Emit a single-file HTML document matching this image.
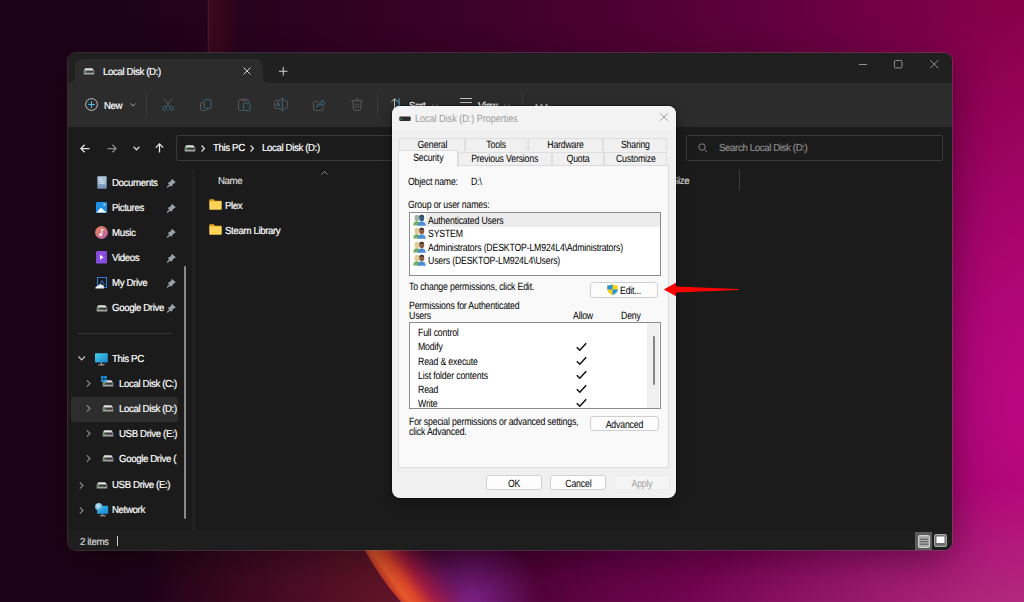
<!DOCTYPE html>
<html><head><meta charset="utf-8">
<style>
*{margin:0;padding:0;box-sizing:border-box}
html,body{width:1024px;height:602px;overflow:hidden}
body{position:relative;font-family:"Liberation Sans",sans-serif;background:#1c0214}
.a{position:absolute}
svg{position:absolute;overflow:visible}
#bg{left:0;top:0;width:1024px;height:602px;background:
  radial-gradient(402px 167px at 1061px 649px, rgba(229,180,203,.30), rgba(229,180,203,0)),
  radial-gradient(220px 70px at 650px 620px, rgba(150,20,110,.22), rgba(150,20,110,0)),
  radial-gradient(759px 399px at 1132px 406px, rgba(229,13,178,.62), rgba(229,13,178,0)),
  linear-gradient(90deg, #1e0318 0px, #1e0318 120px, #2c0220 300px, #3a0226 450px, #4a0032 600px, #65003f 800px, #8a0049 1024px)}
.t,.d{position:absolute;white-space:nowrap;line-height:14px;text-rendering:geometricPrecision}
.t{font-size:10.2px;letter-spacing:-0.4px;color:#fff;-webkit-text-stroke:0.2px currentColor;transform:scaleX(0.95);transform-origin:0 0}
.d{font-size:10.5px;letter-spacing:-0.2px;color:#000;transform:scaleX(0.83);transform-origin:0 0}
.c{transform-origin:50% 0 !important}
</style></head><body>
<div id="bg" class="a"></div>
<div class="a" style="left:207.00px;top:0.00px;width:36.00px;height:53.00px;background:linear-gradient(90deg,rgba(150,70,70,.0) 0px,rgba(150,70,70,.28) 1.5px,rgba(100,20,35,.32) 3px,rgba(95,18,32,.3) 14px,rgba(70,10,30,.15) 26px,rgba(60,5,30,0) 36px)"></div>
<svg style="left:0;top:0" width="1024" height="602" viewBox="0 0 1024 602"><defs><linearGradient id="rt" gradientUnits="userSpaceOnUse" x1="150" y1="0" x2="380" y2="0"><stop offset="0" stop-color="#6e1628" stop-opacity="0"/><stop offset="1" stop-color="#6e1a2a" stop-opacity=".75"/></linearGradient><linearGradient id="ob" gradientUnits="userSpaceOnUse" x1="382" y1="576" x2="434" y2="539"><stop offset="0" stop-color="#c43a2a"/><stop offset=".1" stop-color="#e85a2c"/><stop offset=".25" stop-color="#dc442c"/><stop offset=".45" stop-color="#b82040" stop-opacity=".8"/><stop offset="1" stop-color="#6a1060" stop-opacity="0"/></linearGradient><radialGradient id="pg" gradientUnits="userSpaceOnUse" cx="468" cy="606" r="75"><stop offset="0" stop-color="#8a2aa0" stop-opacity=".85"/><stop offset="1" stop-color="#8a2aa0" stop-opacity="0"/></radialGradient></defs><path d="M150 550H364.5Q380 578 401 602H150Z" fill="url(#rt)"/><ellipse cx="468" cy="606" rx="90" ry="60" fill="url(#pg)"/><path d="M364.5 550H480L530 602H401Q380 578 364.5 550Z" fill="url(#ob)"/></svg>
<div class="a" style="left:68.00px;top:53.00px;width:884.00px;height:497.00px;background:#1b1b1b;border-radius:8px;box-shadow:0 0 0 1px rgba(120,120,120,.33), 0 10px 36px rgba(0,0,0,.38)"></div>
<div class="a" style="left:68.00px;top:53.00px;width:884.00px;height:30.00px;background:#202020;border-radius:8px 8px 0 0"></div>
<div class="a" style="left:75.00px;top:59.00px;width:188.40px;height:24.00px;background:#2c2c2c;border-radius:7px 7px 0 0"></div>
<div class="a" style="left:68.00px;top:83.00px;width:884.00px;height:44.00px;background:#2c2c2c"></div>
<svg style="left:69px;top:77px" width="6" height="6" viewBox="0 0 6 6"><path d="M6 0V6H0A6 6 0 0 0 6 0Z" fill="#2c2c2c"/></svg>
<svg style="left:263.4px;top:77px" width="6" height="6" viewBox="0 0 6 6"><path d="M0 0V6H6A6 6 0 0 1 0 0Z" fill="#2c2c2c"/></svg>
<svg style="left:82.50px;top:67.50px" width="12" height="7" viewBox="0 0 12 7"><path d="M2.2 0.2H9.3L11.2 2.7H0.8Z" fill="#e3e3e7"/><rect x="0.7" y="2.6" width="10.6" height="3.9" rx="0.6" fill="#a4a4a4"/><rect x="1.5" y="2.7" width="9.2" height="2" fill="#3a3a3a"/><rect x="2" y="2.8" width="1.4" height="1.8" fill="#2fb52f"/></svg>
<div class="t" style="left:102.50px;top:66.07px;color:#fff;">Local Disk (D:)</div>
<svg style="left:243.00px;top:66.80px" width="8" height="8" viewBox="0 0 8 8"><path d="M0.5 0.5L7.5 7.5M7.5 0.5L0.5 7.5" stroke="#d4d4d4" stroke-width="1"/></svg>
<svg style="left:279.00px;top:67.00px" width="8.5" height="8.5" viewBox="0 0 8.5 8.5"><path d="M4.25 0V8.5M0 4.25H8.5" stroke="#d4d4d4" stroke-width="1"/></svg>
<svg style="left:858.70px;top:63.50px" width="8" height="1" viewBox="0 0 8 1"><path d="M0 0.5H8" stroke="#a0a0a0" stroke-width="0.9"/></svg>
<svg style="left:893.80px;top:59.80px" width="8.4" height="8.4" viewBox="0 0 8.4 8.4"><rect x="0.45" y="0.45" width="7.5" height="7.5" rx="1.2" fill="none" stroke="#a0a0a0" stroke-width="0.9"/></svg>
<svg style="left:930.00px;top:60.00px" width="8.4" height="8.4" viewBox="0 0 8.4 8.4"><path d="M0.2 0.2L8.2 8.2M8.2 0.2L0.2 8.2" stroke="#a0a0a0" stroke-width="0.9"/></svg>
<svg style="left:85.00px;top:98.00px" width="13" height="13" viewBox="0 0 13 13"><circle cx="6.5" cy="6.5" r="5.9" fill="none" stroke="#d0d0d0" stroke-width="0.9"/><path d="M6.5 3.3V9.7M3.3 6.5H9.7" stroke="#4cc2ff" stroke-width="1"/></svg>
<div class="t" style="left:104.00px;top:100.07px;color:#fff;">New</div>
<svg style="left:129.50px;top:103.00px" width="6" height="4" viewBox="0 0 6 4"><path d="M0.5 0.5L3 3L5.5 0.5" fill="none" stroke="#bdbdbd" stroke-width="0.8"/></svg>
<div class="a" style="left:146.00px;top:93.00px;width:1.00px;height:24.00px;background:#3a3a3a"></div>
<svg style="left:162.00px;top:98.00px" width="12" height="13" viewBox="0 0 12 13"><path d="M2 0.5L7.8 9M10 0.5L4.2 9" stroke="#5e5e5e" stroke-width="0.9"/><circle cx="2.6" cy="10.4" r="2" fill="none" stroke="#3b6b8a" stroke-width="0.9"/><circle cx="9.4" cy="10.4" r="2" fill="none" stroke="#3b6b8a" stroke-width="0.9"/></svg>
<svg style="left:200.00px;top:99.00px" width="12" height="12" viewBox="0 0 12 12"><path d="M2.5 3.2A2 2 0 0 0 0.5 5.2V9.5A2 2 0 0 0 2.5 11.5H5.5A2 2 0 0 0 7.3 10.4" fill="none" stroke="#5e5e5e" stroke-width="0.9"/><rect x="4" y="0.5" width="7" height="9" rx="1.8" fill="none" stroke="#3b6b8a" stroke-width="0.9"/></svg>
<svg style="left:237.50px;top:98.00px" width="13" height="13" viewBox="0 0 13 13"><path d="M3.5 1.6H2.3A1.8 1.8 0 0 0 0.5 3.4V10.7A1.8 1.8 0 0 0 2.3 12.5H4.5M8 1.6H9.2A1.8 1.8 0 0 1 11 3.4V4.5M3.5 2.5V1.3C3.5 0.6 8 0.6 8 1.3V2.5Z" fill="none" stroke="#5e5e5e" stroke-width="0.9"/><rect x="5.5" y="5" width="6.5" height="7.5" rx="1.5" fill="none" stroke="#3b6b8a" stroke-width="0.9"/></svg>
<svg style="left:274.00px;top:97.70px" width="14" height="13" viewBox="0 0 14 13"><rect x="0.5" y="2.5" width="13" height="8" rx="2" fill="none" stroke="#5e5e5e" stroke-width="0.9"/><rect x="7" y="1" width="3" height="11" fill="#2c2c2c"/><path d="M8.5 0.5V12.5M7 0.5H10M7 12.5H10" stroke="#3b6b8a" stroke-width="0.9"/><path d="M2.5 8.5L4.2 4L5.9 8.5M3.1 7H5.3" fill="none" stroke="#3b6b8a" stroke-width="0.9"/></svg>
<svg style="left:312.50px;top:98.00px" width="13" height="13" viewBox="0 0 13 13"><path d="M5 3.5H2.5A2 2 0 0 0 0.5 5.5V10.5A2 2 0 0 0 2.5 12.5H8.5A2 2 0 0 0 10.5 10.5V9.5" fill="none" stroke="#5e5e5e" stroke-width="0.9"/><path d="M3.5 9.5C4 6 6 4.5 9 4.5V2L12.5 5.2L9 8.4V6.2C6.5 6.2 4.8 7.3 3.5 9.5Z" fill="none" stroke="#3b6b8a" stroke-width="0.9" stroke-linejoin="round"/></svg>
<svg style="left:350.70px;top:98.00px" width="12" height="13" viewBox="0 0 12 13"><path d="M0.3 2.8H11.7M4 2.5C4 0.5 8 0.5 8 2.5M1.6 2.8L2.5 11A1.6 1.6 0 0 0 4.1 12.5H7.9A1.6 1.6 0 0 0 9.5 11L10.4 2.8M4.8 5.5V9.8M7.2 5.5V9.8" fill="none" stroke="#5e5e5e" stroke-width="0.9"/></svg>
<div class="a" style="left:377.00px;top:93.00px;width:1.00px;height:24.00px;background:#3a3a3a"></div>
<svg style="left:390.50px;top:98.00px" width="11" height="12" viewBox="0 0 11 12"><path d="M3.5 11.5V0.8M0.5 3.8L3.5 0.8L6.5 3.8" fill="none" stroke="#d0d0d0" stroke-width="0.9"/><path d="M8 0.5V11.2M5.3 8.5L8 11.2L10.7 8.5" fill="none" stroke="#4cc2ff" stroke-width="0.9"/></svg>
<div class="t" style="left:409.00px;top:100.07px;color:#fff;">Sort</div>
<svg style="left:432.00px;top:104.00px" width="6" height="4" viewBox="0 0 6 4"><path d="M0.5 0.5L3 3L5.5 0.5" fill="none" stroke="#bdbdbd" stroke-width="0.8"/></svg>
<svg style="left:460.00px;top:98.00px" width="12" height="10" viewBox="0 0 12 10"><path d="M0 0.5H12M0 4.5H12M0 8.5H12" stroke="#d0d0d0" stroke-width="0.9"/></svg>
<div class="t" style="left:478.40px;top:100.07px;color:#fff;">View</div>
<svg style="left:503.80px;top:104.00px" width="6" height="4" viewBox="0 0 6 4"><path d="M0.5 0.5L3 3L5.5 0.5" fill="none" stroke="#bdbdbd" stroke-width="0.8"/></svg>
<div class="a" style="left:522.00px;top:93.00px;width:1.00px;height:24.00px;background:#3a3a3a"></div>
<svg style="left:535.00px;top:104.00px" width="13" height="3" viewBox="0 0 13 3"><circle cx="1.5" cy="1.5" r="1.2" fill="#e0e0e0"/><circle cx="6.5" cy="1.5" r="1.2" fill="#e0e0e0"/><circle cx="11.5" cy="1.5" r="1.2" fill="#e0e0e0"/></svg>
<svg style="left:80.00px;top:143.50px" width="10" height="9" viewBox="0 0 10 9"><path d="M9.5 4.5H1M4.6 0.8L0.9 4.5L4.6 8.2" fill="none" stroke="#e6e6e6" stroke-width="1.25"/></svg>
<svg style="left:107.00px;top:143.50px" width="10" height="9" viewBox="0 0 10 9"><path d="M0.5 4.5H9M5.4 0.8L9.1 4.5L5.4 8.2" fill="none" stroke="#8a8a8a" stroke-width="1.25"/></svg>
<svg style="left:133.00px;top:145.50px" width="7" height="5" viewBox="0 0 7 5"><path d="M0.6 0.8L3.5 3.8L6.4 0.8" fill="none" stroke="#d6d6d6" stroke-width="1.25"/></svg>
<svg style="left:155.00px;top:143.00px" width="9" height="10" viewBox="0 0 9 10"><path d="M4.5 9.5V1M0.8 4.6L4.5 0.9L8.2 4.6" fill="none" stroke="#e6e6e6" stroke-width="1.25"/></svg>
<div class="a" style="left:176.40px;top:134.60px;width:496.00px;height:26.40px;border:1px solid #3a3a3a;border-radius:3px;background:#1b1b1b"></div>
<svg style="left:184.00px;top:144.50px" width="12" height="7" viewBox="0 0 12 7"><path d="M2.2 0.2H9.3L11.2 2.7H0.8Z" fill="#e3e3e7"/><rect x="0.7" y="2.6" width="10.6" height="3.9" rx="0.6" fill="#a4a4a4"/><rect x="1.5" y="2.7" width="9.2" height="2" fill="#3a3a3a"/><rect x="2" y="2.8" width="1.4" height="1.8" fill="#2fb52f"/></svg>
<svg style="left:200.50px;top:145.00px" width="4" height="7" viewBox="0 0 4 7"><path d="M0.6 0.5L3.4 3.5L0.6 6.5" fill="none" stroke="#d6d6d6" stroke-width="1.3"/></svg>
<div class="t" style="left:213.00px;top:142.07px;color:#fff;">This PC</div>
<svg style="left:250.00px;top:145.00px" width="4" height="7" viewBox="0 0 4 7"><path d="M0.6 0.5L3.4 3.5L0.6 6.5" fill="none" stroke="#d6d6d6" stroke-width="1.3"/></svg>
<div class="t" style="left:261.50px;top:142.07px;color:#fff;">Local Disk (D:)</div>
<div class="a" style="left:686.40px;top:134.70px;width:256.30px;height:26.30px;border:1px solid #3a3a3a;border-radius:2px;background:#1b1b1b"></div>
<svg style="left:698.00px;top:143.00px" width="10" height="10" viewBox="0 0 10 10"><circle cx="4" cy="4" r="3.2" fill="none" stroke="#8c8c8c" stroke-width="0.9"/><path d="M6.3 6.3L9 9" stroke="#8c8c8c" stroke-width="0.9"/></svg>
<div class="t" style="left:718.60px;top:142.07px;color:#8c8c8c;">Search Local Disk (D:)</div>
<div class="a" style="left:70.70px;top:397.00px;width:107.00px;height:24.50px;background:#2d2d2d;border-radius:3px"></div>
<div class="a" style="left:76.50px;top:333.00px;width:95.00px;height:1.00px;background:#333"></div>
<div class="a" style="left:184.00px;top:266.00px;width:2.00px;height:253.00px;background:#8a8a8a;border-radius:1px"></div>
<div class="a" style="left:192.50px;top:170.00px;width:1.50px;height:361.00px;background:#2b2b2b"></div>
<div class="a" style="left:68.00px;top:531.00px;width:884.00px;height:19.00px;background:#1e1e1e;border-radius:0 0 8px 8px"></div>
<svg style="left:96.50px;top:176.00px" width="10" height="13" viewBox="0 0 10 13"><defs><linearGradient id="gd" x1="0" y1="0" x2="0" y2="1"><stop offset="0" stop-color="#b4cbe2"/><stop offset="1" stop-color="#6f8fb3"/></linearGradient></defs><rect x="0.3" y="0.3" width="9.4" height="12.4" rx="0.8" fill="url(#gd)"/><path d="M2 3.3H5.5M2 5.3H8M2 7.3H8" stroke="#eaf2fa" stroke-width="0.8"/></svg>
<div class="t" style="left:112.00px;top:177.07px;color:#fff;">Documents</div>
<svg style="left:167.00px;top:178.50px" width="9" height="9" viewBox="0 0 9 9"><path d="M5.1 0.3L8.4 3.3L5.9 4.8L4.4 7.4L1.1 4.1L3.7 2.7Z" fill="#9ba4ac" stroke="#9ba4ac" stroke-width=".6" stroke-linejoin="round"/><path d="M3.2 5.5L0.6 8" stroke="#9ba4ac" stroke-width="1.3" stroke-linecap="round"/></svg>
<svg style="left:96.00px;top:202.00px" width="11" height="11" viewBox="0 0 11 11"><rect x="0" y="0" width="11" height="11" rx="0.8" fill="#1e8fe3"/><path d="M0.5 10.5L5 5.8L10.5 10.5Z" fill="#fff"/><circle cx="8.3" cy="2.6" r="0.9" fill="#fff"/></svg>
<div class="t" style="left:112.00px;top:202.07px;color:#fff;">Pictures</div>
<svg style="left:167.00px;top:203.50px" width="9" height="9" viewBox="0 0 9 9"><path d="M5.1 0.3L8.4 3.3L5.9 4.8L4.4 7.4L1.1 4.1L3.7 2.7Z" fill="#9ba4ac" stroke="#9ba4ac" stroke-width=".6" stroke-linejoin="round"/><path d="M3.2 5.5L0.6 8" stroke="#9ba4ac" stroke-width="1.3" stroke-linecap="round"/></svg>
<svg style="left:95.00px;top:226.20px" width="13" height="13" viewBox="0 0 13 13"><defs><linearGradient id="gm" x1="0" y1="0" x2="1" y2="1"><stop offset="0" stop-color="#f08a50"/><stop offset="1" stop-color="#b55ab0"/></linearGradient></defs><circle cx="6.5" cy="6.5" r="6.4" fill="url(#gm)"/><path d="M6.8 3V8.6" stroke="#fff" stroke-width="1"/><circle cx="5.6" cy="8.8" r="1.4" fill="#fff"/><path d="M6.8 3.2L8.6 4" stroke="#fff" stroke-width="1"/></svg>
<div class="t" style="left:112.00px;top:227.07px;color:#fff;">Music</div>
<svg style="left:167.00px;top:228.50px" width="9" height="9" viewBox="0 0 9 9"><path d="M5.1 0.3L8.4 3.3L5.9 4.8L4.4 7.4L1.1 4.1L3.7 2.7Z" fill="#9ba4ac" stroke="#9ba4ac" stroke-width=".6" stroke-linejoin="round"/><path d="M3.2 5.5L0.6 8" stroke="#9ba4ac" stroke-width="1.3" stroke-linecap="round"/></svg>
<svg style="left:96.00px;top:251.20px" width="11" height="13" viewBox="0 0 11 13"><rect x="0" y="0" width="11" height="12.6" rx="0.8" fill="#8a4ee0"/><path d="M1.2 1.5V11.5M9.8 1.5V11.5" stroke="#5d2aa8" stroke-width="1" stroke-dasharray="1 1.5"/><path d="M4 3.8L7.5 6.3L4 8.8Z" fill="#fff"/></svg>
<div class="t" style="left:112.00px;top:252.07px;color:#fff;">Videos</div>
<svg style="left:167.00px;top:253.50px" width="9" height="9" viewBox="0 0 9 9"><path d="M5.1 0.3L8.4 3.3L5.9 4.8L4.4 7.4L1.1 4.1L3.7 2.7Z" fill="#9ba4ac" stroke="#9ba4ac" stroke-width=".6" stroke-linejoin="round"/><path d="M3.2 5.5L0.6 8" stroke="#9ba4ac" stroke-width="1.3" stroke-linecap="round"/></svg>
<svg style="left:95.00px;top:277.00px" width="13" height="12" viewBox="0 0 13 12"><rect x="2.5" y="0.5" width="9" height="10" fill="none" stroke="#2b7de0" stroke-width="1"/><path d="M4.5 8L7 3.5L9.5 8" fill="none" stroke="#2b7de0" stroke-width="0.9"/><path d="M0.3 11.5C0.3 9.5 2 8.8 3 9C3.3 7.2 5.5 6.5 6.8 7.8C8.3 7.6 9.2 9 9 11.5Z" fill="#e8eef6"/></svg>
<div class="t" style="left:112.00px;top:277.07px;color:#fff;">My Drive</div>
<svg style="left:167.00px;top:278.50px" width="9" height="9" viewBox="0 0 9 9"><path d="M5.1 0.3L8.4 3.3L5.9 4.8L4.4 7.4L1.1 4.1L3.7 2.7Z" fill="#9ba4ac" stroke="#9ba4ac" stroke-width=".6" stroke-linejoin="round"/><path d="M3.2 5.5L0.6 8" stroke="#9ba4ac" stroke-width="1.3" stroke-linecap="round"/></svg>
<svg style="left:95.50px;top:304.50px" width="12" height="7" viewBox="0 0 12 7"><path d="M2.2 0.2H9.3L11.2 2.7H0.8Z" fill="#e3e3e7"/><rect x="0.7" y="2.6" width="10.6" height="3.9" rx="0.6" fill="#a4a4a4"/><rect x="1.5" y="2.7" width="9.2" height="2" fill="#3a3a3a"/><rect x="2" y="2.8" width="1.4" height="1.8" fill="#2fb52f"/></svg>
<div class="t" style="left:112.00px;top:302.07px;color:#fff;">Google Drive</div>
<svg style="left:167.00px;top:303.50px" width="9" height="9" viewBox="0 0 9 9"><path d="M5.1 0.3L8.4 3.3L5.9 4.8L4.4 7.4L1.1 4.1L3.7 2.7Z" fill="#9ba4ac" stroke="#9ba4ac" stroke-width=".6" stroke-linejoin="round"/><path d="M3.2 5.5L0.6 8" stroke="#9ba4ac" stroke-width="1.3" stroke-linecap="round"/></svg>
<svg style="left:77.80px;top:356.30px" width="8" height="5" viewBox="0 0 8 5"><path d="M0.5 0.5L3.7 3.9L6.9 0.5" fill="none" stroke="#c8c8c8" stroke-width="1.2"/></svg>
<svg style="left:95.00px;top:353.30px" width="13" height="13" viewBox="0 0 13 13"><defs><linearGradient id="gpc" x1="0" y1="0" x2="1" y2="1"><stop offset="0" stop-color="#45d6ea"/><stop offset="1" stop-color="#1a7ed0"/></linearGradient></defs><rect x="0" y="0.3" width="12.8" height="9.3" rx="0.8" fill="url(#gpc)"/><path d="M6.4 9.6V11.6M3.4 11.9H9.4" stroke="#cfcfcf" stroke-width="0.9"/></svg>
<div class="t" style="left:112.00px;top:353.07px;color:#fff;">This PC</div>
<svg style="left:85.50px;top:380.00px" width="5" height="7" viewBox="0 0 5 7"><path d="M0.8 0.4L4 3.5L0.8 6.6" fill="none" stroke="#8a8a8a" stroke-width="1.2"/></svg>
<svg style="left:102.00px;top:380.30px" width="12" height="7" viewBox="0 0 12 7"><path d="M2.2 0.2H9.3L11.2 2.7H0.8Z" fill="#e3e3e7"/><rect x="0.7" y="2.6" width="10.6" height="3.9" rx="0.6" fill="#a4a4a4"/><rect x="1.5" y="2.7" width="9.2" height="2" fill="#3a3a3a"/><rect x="2" y="2.8" width="1.4" height="1.8" fill="#2fb52f"/></svg>
<svg style="left:101.20px;top:376.20px" width="6" height="6" viewBox="0 0 6 6"><rect x="0" y="0" width="2.6" height="2.6" rx="0.4" fill="#1a9cf0"/><rect x="3.2" y="0" width="2.6" height="2.6" rx="0.4" fill="#1a9cf0"/><rect x="0" y="3.2" width="2.6" height="2.6" rx="0.4" fill="#1a9cf0"/><rect x="3.2" y="3.2" width="2.6" height="2.6" rx="0.4" fill="#1a9cf0"/></svg>
<div class="t" style="left:118.50px;top:378.07px;color:#fff;">Local Disk (C:)</div>
<svg style="left:85.50px;top:405.05px" width="5" height="7" viewBox="0 0 5 7"><path d="M0.8 0.4L4 3.5L0.8 6.6" fill="none" stroke="#8a8a8a" stroke-width="1.2"/></svg>
<svg style="left:102.00px;top:405.35px" width="12" height="7" viewBox="0 0 12 7"><path d="M2.2 0.2H9.3L11.2 2.7H0.8Z" fill="#e3e3e7"/><rect x="0.7" y="2.6" width="10.6" height="3.9" rx="0.6" fill="#a4a4a4"/><rect x="1.5" y="2.7" width="9.2" height="2" fill="#3a3a3a"/><rect x="2" y="2.8" width="1.4" height="1.8" fill="#2fb52f"/></svg>
<div class="t" style="left:118.50px;top:403.12px;color:#fff;">Local Disk (D:)</div>
<svg style="left:85.50px;top:430.10px" width="5" height="7" viewBox="0 0 5 7"><path d="M0.8 0.4L4 3.5L0.8 6.6" fill="none" stroke="#8a8a8a" stroke-width="1.2"/></svg>
<svg style="left:102.00px;top:430.40px" width="12" height="7" viewBox="0 0 12 7"><path d="M2.2 0.2H9.3L11.2 2.7H0.8Z" fill="#e3e3e7"/><rect x="0.7" y="2.6" width="10.6" height="3.9" rx="0.6" fill="#a4a4a4"/><rect x="1.5" y="2.7" width="9.2" height="2" fill="#3a3a3a"/><rect x="2" y="2.8" width="1.4" height="1.8" fill="#2fb52f"/></svg>
<div class="t" style="left:118.50px;top:428.17px;color:#fff;">USB Drive (E:)</div>
<svg style="left:85.50px;top:455.15px" width="5" height="7" viewBox="0 0 5 7"><path d="M0.8 0.4L4 3.5L0.8 6.6" fill="none" stroke="#8a8a8a" stroke-width="1.2"/></svg>
<svg style="left:102.00px;top:455.45px" width="12" height="7" viewBox="0 0 12 7"><path d="M2.2 0.2H9.3L11.2 2.7H0.8Z" fill="#e3e3e7"/><rect x="0.7" y="2.6" width="10.6" height="3.9" rx="0.6" fill="#a4a4a4"/><rect x="1.5" y="2.7" width="9.2" height="2" fill="#3a3a3a"/><rect x="2" y="2.8" width="1.4" height="1.8" fill="#2fb52f"/></svg>
<div class="t" style="left:118.50px;top:453.22px;color:#fff;">Google Drive (</div>
<div class="t" style="left:112.00px;top:478.67px;color:#fff;">USB Drive (E:)</div>
<svg style="left:78.60px;top:481.50px" width="5" height="7" viewBox="0 0 5 7"><path d="M0.8 0.4L4 3.5L0.8 6.6" fill="none" stroke="#8a8a8a" stroke-width="1.2"/></svg>
<svg style="left:96.00px;top:482.00px" width="12" height="7" viewBox="0 0 12 7"><path d="M2.2 0.2H9.3L11.2 2.7H0.8Z" fill="#e3e3e7"/><rect x="0.7" y="2.6" width="10.6" height="3.9" rx="0.6" fill="#a4a4a4"/><rect x="1.5" y="2.7" width="9.2" height="2" fill="#3a3a3a"/><rect x="2" y="2.8" width="1.4" height="1.8" fill="#2fb52f"/></svg>
<svg style="left:78.60px;top:506.70px" width="5" height="7" viewBox="0 0 5 7"><path d="M0.8 0.4L4 3.5L0.8 6.6" fill="none" stroke="#8a8a8a" stroke-width="1.2"/></svg>
<svg style="left:94.80px;top:503.00px" width="14" height="14" viewBox="0 0 14 14"><defs><linearGradient id="gn" x1="0" y1="0" x2="1" y2="1"><stop offset="0" stop-color="#32c0ea"/><stop offset="1" stop-color="#1a86d2"/></linearGradient><radialGradient id="gg" cx="0.4" cy="0.35" r="0.7"><stop offset="0" stop-color="#cfeefc"/><stop offset="1" stop-color="#3a9ad0"/></radialGradient></defs><rect x="2.2" y="2.8" width="11" height="8" fill="url(#gn)"/><path d="M7.7 10.8V12.5M4.7 12.8H10.7" stroke="#bdbdbd" stroke-width="0.9"/><circle cx="3.8" cy="3.8" r="3.7" fill="url(#gg)"/></svg>
<div class="t" style="left:112.00px;top:503.67px;color:#fff;">Network</div>
<div class="t" style="left:79.70px;top:535.57px;color:#d6d6d6;">2 items</div>
<div class="a" style="left:117.00px;top:536.00px;width:1.00px;height:10.00px;background:#cfcfcf"></div>
<div class="t" style="left:218.00px;top:174.57px;color:#d9d9d9;">Name</div>
<svg style="left:320.50px;top:170.50px" width="7" height="4" viewBox="0 0 7 4"><path d="M0.5 3.5L3.5 0.5L6.5 3.5" fill="none" stroke="#9a9a9a" stroke-width="0.9"/></svg>
<div class="t" style="left:672.00px;top:174.57px;color:#d9d9d9;">Size</div>
<div class="a" style="left:739.00px;top:169.50px;width:1.00px;height:20.00px;background:#3a3a3a"></div>
<svg style="left:208.50px;top:199.00px" width="13" height="11" viewBox="0 0 13 11"><path d="M0.3 1.2A0.9 0.9 0 0 1 1.2 0.3H4.6L6 1.7H11.8A0.9 0.9 0 0 1 12.7 2.6V3.5H0.3Z" fill="#e8a817"/><rect x="0.3" y="2.6" width="12.4" height="8.1" rx="0.8" fill="#ffd25a"/></svg>
<div class="t" style="left:224.50px;top:199.57px;color:#fff;">Plex</div>
<svg style="left:208.50px;top:224.00px" width="13" height="11" viewBox="0 0 13 11"><path d="M0.3 1.2A0.9 0.9 0 0 1 1.2 0.3H4.6L6 1.7H11.8A0.9 0.9 0 0 1 12.7 2.6V3.5H0.3Z" fill="#e8a817"/><rect x="0.3" y="2.6" width="12.4" height="8.1" rx="0.8" fill="#ffd25a"/></svg>
<div class="t" style="left:224.50px;top:224.57px;color:#fff;">Steam Library</div>
<div class="a" style="left:914.60px;top:532.00px;width:17.50px;height:18.00px;background:#5c5c5c"></div>
<svg style="left:918.00px;top:535.00px" width="12" height="13" viewBox="0 0 12 13"><rect x="0.6" y="0.6" width="10.8" height="11.8" rx="1.5" fill="#a8a8a8" stroke="#d0d0d0" stroke-width="1.2"/><path d="M1.5 4.2H10.5M1.5 6.7H10.5M1.5 9.2H10.5" stroke="#484848" stroke-width="0.8"/></svg>
<svg style="left:934.00px;top:534.00px" width="13" height="13" viewBox="0 0 13 13"><rect x="0.6" y="0.6" width="11.8" height="11.8" rx="1.5" fill="#6a6a6a" stroke="#a8a8a8" stroke-width="1.1"/><rect x="2.5" y="2.5" width="8" height="6.5" fill="#fff"/></svg>
<div class="a" style="left:392.00px;top:106.00px;width:284.00px;height:391.50px;background:#f0f0f0;border-radius:8px;box-shadow:0 0 0 1px rgba(0,0,0,.3), 0 4px 14px rgba(0,0,0,.35)"></div>
<div class="a" style="left:392.00px;top:106.00px;width:284.00px;height:24.00px;background:#f3f3f3;border-radius:8px 8px 0 0"></div>
<svg style="left:399.00px;top:115.50px" width="12" height="6" viewBox="0 0 12 6"><rect x="0.3" y="0.5" width="11.4" height="4.6" rx="1" fill="#2e2e2e"/><rect x="1.3" y="2.6" width="1.3" height="1.2" fill="#39b54a"/></svg>
<div class="d" style="left:415.00px;top:112.06px;color:#9a9a9a;letter-spacing:0;transform:scaleX(0.86)">Local Disk (D:) Properties</div>
<svg style="left:660.00px;top:113.30px" width="8" height="8" viewBox="0 0 8 8"><path d="M0.2 0.2L7.8 7.8M7.8 0.2L0.2 7.8" stroke="#8a8a8a" stroke-width="0.8"/></svg>
<div class="a" style="left:398.50px;top:137.90px;width:66.80px;height:13.60px;background:#f0f0f0;border:1px solid #dedede;border-bottom:none"></div>
<div class="d c" style="left:398.50px;top:138.36px;width:66.80px;text-align:center;color:#000;">General</div>
<div class="a" style="left:465.30px;top:137.90px;width:62.20px;height:13.60px;background:#f0f0f0;border:1px solid #dedede;border-bottom:none"></div>
<div class="d c" style="left:465.30px;top:138.36px;width:62.20px;text-align:center;color:#000;">Tools</div>
<div class="a" style="left:527.50px;top:137.90px;width:75.00px;height:13.60px;background:#f0f0f0;border:1px solid #dedede;border-bottom:none"></div>
<div class="d c" style="left:527.50px;top:138.36px;width:75.00px;text-align:center;color:#000;">Hardware</div>
<div class="a" style="left:602.50px;top:137.90px;width:64.70px;height:13.60px;background:#f0f0f0;border:1px solid #dedede;border-bottom:none"></div>
<div class="d c" style="left:602.50px;top:138.36px;width:64.70px;text-align:center;color:#000;">Sharing</div>
<div class="a" style="left:458.20px;top:151.50px;width:93.40px;height:14.50px;background:#f0f0f0;border:1px solid #dedede;border-bottom:none"></div>
<div class="d c" style="left:458.20px;top:152.06px;width:93.40px;text-align:center;color:#000;">Previous Versions</div>
<div class="a" style="left:551.60px;top:151.50px;width:52.00px;height:14.50px;background:#f0f0f0;border:1px solid #dedede;border-bottom:none"></div>
<div class="d c" style="left:551.60px;top:152.06px;width:52.00px;text-align:center;color:#000;">Quota</div>
<div class="a" style="left:603.60px;top:151.50px;width:63.60px;height:14.50px;background:#f0f0f0;border:1px solid #dedede;border-bottom:none"></div>
<div class="d c" style="left:603.60px;top:152.06px;width:63.60px;text-align:center;color:#000;">Customize</div>
<div class="a" style="left:397.60px;top:165.20px;width:271.90px;height:302.50px;background:#f9f9f9;border:1px solid #dcdcdc"></div>
<div class="a" style="left:397.60px;top:149.80px;width:60.60px;height:17.00px;background:#f9f9f9;border:1px solid #dcdcdc;border-bottom:none"></div>
<div class="d c" style="left:397.70px;top:150.86px;width:60.50px;text-align:center;color:#000;">Security</div>
<div class="d" style="left:408.00px;top:174.86px;color:#000;">Object name:</div>
<div class="d" style="left:470.80px;top:174.86px;color:#000;">D:\</div>
<div class="d" style="left:408.00px;top:198.36px;color:#000;">Group or user names:</div>
<div class="a" style="left:408.50px;top:211.50px;width:252.00px;height:64.00px;background:#fff;border:1px solid #8c8c8c"></div>
<div class="a" style="left:426.00px;top:213.20px;width:233.50px;height:13.40px;background:#ececec"></div>
<svg style="left:413.00px;top:213.90px" width="13" height="12" viewBox="0 0 13 12"><path d="M0.3 11.6C0.3 8.6 1.3 7.4 3.9 7.2C6.5 7.4 7.4 8.6 7.4 11.6Z" fill="#6fb05a"/><ellipse cx="3.9" cy="3.9" rx="2.4" ry="3.1" fill="#9fb2a4"/><path d="M4.6 11.8C4.6 8.8 5.8 7.6 8.7 7.4C11.6 7.6 12.8 8.8 12.8 11.8Z" fill="#4b8fd6"/><ellipse cx="8.7" cy="4.2" rx="2.5" ry="3.1" fill="#3d5f86"/><path d="M6.2 3.2C6.4 1.2 7.5 0.8 8.7 0.8C10 0.8 11.1 1.3 11.2 3.2C10.2 2.4 7.4 2.4 6.2 3.2Z" fill="#2a4466"/></svg>
<div class="d" style="left:427.90px;top:214.06px;color:#000;">Authenticated Users</div>
<svg style="left:413.00px;top:227.20px" width="13" height="12" viewBox="0 0 13 12"><path d="M0.3 11.6C0.3 8.6 1.3 7.4 3.9 7.2C6.5 7.4 7.4 8.6 7.4 11.6Z" fill="#6fb05a"/><ellipse cx="3.9" cy="3.9" rx="2.4" ry="3.1" fill="#e3cc92"/><path d="M4.6 11.8C4.6 8.8 5.8 7.6 8.7 7.4C11.6 7.6 12.8 8.8 12.8 11.8Z" fill="#4b8fd6"/><ellipse cx="8.7" cy="4.2" rx="2.5" ry="3.1" fill="#8a5e44"/><path d="M6.2 3.2C6.4 1.2 7.5 0.8 8.7 0.8C10 0.8 11.1 1.3 11.2 3.2C10.2 2.4 7.4 2.4 6.2 3.2Z" fill="#3b3430"/></svg>
<div class="d" style="left:427.90px;top:227.36px;color:#000;">SYSTEM</div>
<svg style="left:413.00px;top:240.50px" width="13" height="12" viewBox="0 0 13 12"><path d="M0.3 11.6C0.3 8.6 1.3 7.4 3.9 7.2C6.5 7.4 7.4 8.6 7.4 11.6Z" fill="#6fb05a"/><ellipse cx="3.9" cy="3.9" rx="2.4" ry="3.1" fill="#e3cc92"/><path d="M4.6 11.8C4.6 8.8 5.8 7.6 8.7 7.4C11.6 7.6 12.8 8.8 12.8 11.8Z" fill="#4b8fd6"/><ellipse cx="8.7" cy="4.2" rx="2.5" ry="3.1" fill="#8a5e44"/><path d="M6.2 3.2C6.4 1.2 7.5 0.8 8.7 0.8C10 0.8 11.1 1.3 11.2 3.2C10.2 2.4 7.4 2.4 6.2 3.2Z" fill="#3b3430"/></svg>
<div class="d" style="left:427.90px;top:240.66px;color:#000;">Administrators (DESKTOP-LM924L4\Administrators)</div>
<svg style="left:413.00px;top:253.80px" width="13" height="12" viewBox="0 0 13 12"><path d="M0.3 11.6C0.3 8.6 1.3 7.4 3.9 7.2C6.5 7.4 7.4 8.6 7.4 11.6Z" fill="#6fb05a"/><ellipse cx="3.9" cy="3.9" rx="2.4" ry="3.1" fill="#e3cc92"/><path d="M4.6 11.8C4.6 8.8 5.8 7.6 8.7 7.4C11.6 7.6 12.8 8.8 12.8 11.8Z" fill="#4b8fd6"/><ellipse cx="8.7" cy="4.2" rx="2.5" ry="3.1" fill="#8a5e44"/><path d="M6.2 3.2C6.4 1.2 7.5 0.8 8.7 0.8C10 0.8 11.1 1.3 11.2 3.2C10.2 2.4 7.4 2.4 6.2 3.2Z" fill="#3b3430"/></svg>
<div class="d" style="left:427.90px;top:253.96px;color:#000;">Users (DESKTOP-LM924L4\Users)</div>
<div class="d" style="left:408.80px;top:280.46px;color:#000;">To change permissions, click Edit.</div>
<div class="a" style="left:589.70px;top:282.30px;width:68.70px;height:15.50px;background:#fdfdfd;border:1px solid #d0d0d0;border-radius:3px"></div>
<svg style="left:606.70px;top:284.40px" width="11" height="11" viewBox="0 0 11 11"><path d="M5.5 0.2C3.8 1.3 2 1.6 0.3 1.6V5.3C0.3 8 2.5 9.9 5.5 10.9C8.5 9.9 10.7 8 10.7 5.3V1.6C9 1.6 7.2 1.3 5.5 0.2Z" fill="#ffcf10"/><path d="M5.5 0.2C3.8 1.3 2 1.6 0.3 1.6V5.4H5.5Z" fill="#1f98e4"/><path d="M5.5 5.4H10.7C10.7 8 8.5 9.9 5.5 10.9Z" fill="#1f98e4"/></svg>
<div class="d" style="left:619.50px;top:283.86px;color:#000;">Edit...</div>
<div class="d" style="left:408.50px;top:299.16px;color:#000;">Permissions for Authenticated</div>
<div class="d" style="left:408.50px;top:308.86px;color:#000;">Users</div>
<div class="d" style="left:572.90px;top:308.86px;color:#000;">Allow</div>
<div class="d" style="left:620.80px;top:308.86px;color:#000;">Deny</div>
<div class="a" style="left:408.50px;top:322.10px;width:252.00px;height:87.00px;background:#fff;border:1px solid #8c8c8c"></div>
<div class="a" style="left:647.30px;top:323.10px;width:12.20px;height:85.00px;background:#f0f0f0"></div>
<div class="a" style="left:652.50px;top:335.90px;width:2.00px;height:48.90px;background:#858585;border-radius:1px"></div>
<div class="d" style="left:418.20px;top:326.26px;color:#000;">Full control</div>
<div class="d" style="left:418.20px;top:340.39px;color:#000;">Modify</div>
<svg style="left:575.50px;top:341.63px" width="11" height="10" viewBox="0 0 11 10"><path d="M0.8 5.2L3.8 8.2L10.2 1.2" fill="none" stroke="#111" stroke-width="1.5"/></svg>
<div class="d" style="left:418.20px;top:354.52px;color:#000;">Read &amp; execute</div>
<svg style="left:575.50px;top:355.76px" width="11" height="10" viewBox="0 0 11 10"><path d="M0.8 5.2L3.8 8.2L10.2 1.2" fill="none" stroke="#111" stroke-width="1.5"/></svg>
<div class="d" style="left:418.20px;top:368.65px;color:#000;">List folder contents</div>
<svg style="left:575.50px;top:369.89px" width="11" height="10" viewBox="0 0 11 10"><path d="M0.8 5.2L3.8 8.2L10.2 1.2" fill="none" stroke="#111" stroke-width="1.5"/></svg>
<div class="d" style="left:418.20px;top:382.78px;color:#000;">Read</div>
<svg style="left:575.50px;top:384.02px" width="11" height="10" viewBox="0 0 11 10"><path d="M0.8 5.2L3.8 8.2L10.2 1.2" fill="none" stroke="#111" stroke-width="1.5"/></svg>
<div class="d" style="left:418.20px;top:396.91px;color:#000;">Write</div>
<svg style="left:575.50px;top:398.15px" width="11" height="10" viewBox="0 0 11 10"><path d="M0.8 5.2L3.8 8.2L10.2 1.2" fill="none" stroke="#111" stroke-width="1.5"/></svg>
<div class="d" style="left:408.60px;top:414.56px;color:#000;">For special permissions or advanced settings,</div>
<div class="d" style="left:408.60px;top:424.56px;color:#000;">click Advanced.</div>
<div class="a" style="left:589.80px;top:415.70px;width:68.90px;height:15.70px;background:#fdfdfd;border:1px solid #d0d0d0;border-radius:3px"></div>
<div class="d c" style="left:589.80px;top:417.56px;width:68.90px;text-align:center;color:#000;">Advanced</div>
<div class="a" style="left:486.30px;top:474.70px;width:56.20px;height:15.70px;background:#fdfdfd;border:1px solid #d0d0d0;border-radius:3px"></div>
<div class="d c" style="left:486.30px;top:476.56px;width:56.20px;text-align:center;color:#000;">OK</div>
<div class="a" style="left:549.70px;top:474.70px;width:56.70px;height:15.70px;background:#fdfdfd;border:1px solid #d0d0d0;border-radius:3px"></div>
<div class="d c" style="left:549.70px;top:476.56px;width:56.70px;text-align:center;color:#000;">Cancel</div>
<div class="a" style="left:613.80px;top:474.70px;width:56.00px;height:15.70px;background:#f5f5f5;border:1px solid #ececec;border-radius:3px"></div>
<div class="d c" style="left:613.80px;top:476.56px;width:56.00px;text-align:center;color:#a0a0a0;">Apply</div>
<svg style="left:663px;top:282px" width="77" height="15" viewBox="0 0 77 15"><path d="M0.7 7.5L13 0.7V4.6L75.4 7.1A0.45 0.45 0 0 1 75.4 8L13 10.4V14.3Z" fill="#f00"/></svg>
</body></html>
